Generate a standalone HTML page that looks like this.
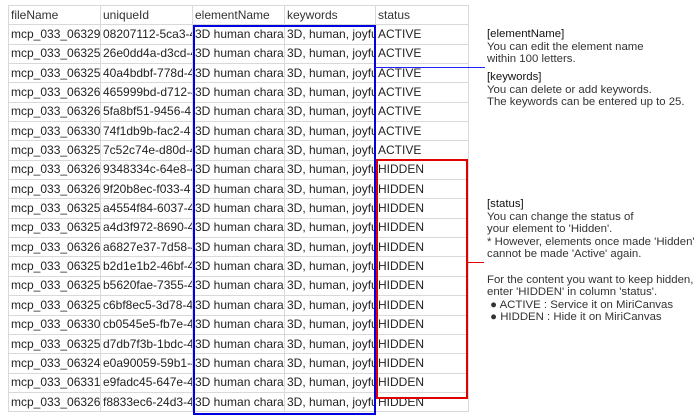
<!DOCTYPE html>
<html><head><meta charset="utf-8"><style>
*{margin:0;padding:0;box-sizing:border-box}
body{width:700px;height:400px;overflow:hidden;background:#fff;font-family:"Liberation Sans",Arial,sans-serif;position:relative}
table{position:absolute;left:8px;top:5px;width:460px;border-collapse:collapse;table-layout:fixed}
td{height:19.35px;border:1px solid #d9d9d9;font-size:12px;color:#222;white-space:nowrap;overflow:hidden;padding:0 0 0 2px;line-height:17px}
.hdr td{color:#333}
.box{position:absolute}
.note{position:absolute;left:487px;font-size:11.4px;line-height:12.6px;color:#333}
.note b{font-weight:normal;color:#111}
</style></head><body>
<table>
<colgroup><col style="width:92px"><col style="width:92px"><col style="width:92px"><col style="width:91px"><col style="width:93px"></colgroup>
<tr class="hdr"><td>fileName</td><td>uniqueId</td><td>elementName</td><td>keywords</td><td>status</td></tr>
<tr><td>mcp_033_06329</td><td>08207112-5ca3-4</td><td>3D human chara</td><td>3D, human, joyfu</td><td>ACTIVE</td></tr>
<tr><td>mcp_033_06325</td><td>26e0dd4a-d3cd-4</td><td>3D human chara</td><td>3D, human, joyfu</td><td>ACTIVE</td></tr>
<tr><td>mcp_033_06325</td><td>40a4bdbf-778d-4</td><td>3D human chara</td><td>3D, human, joyfu</td><td>ACTIVE</td></tr>
<tr><td>mcp_033_06326</td><td>465999bd-d712-4</td><td>3D human chara</td><td>3D, human, joyfu</td><td>ACTIVE</td></tr>
<tr><td>mcp_033_06326</td><td>5fa8bf51-9456-4</td><td>3D human chara</td><td>3D, human, joyfu</td><td>ACTIVE</td></tr>
<tr><td>mcp_033_06330</td><td>74f1db9b-fac2-4</td><td>3D human chara</td><td>3D, human, joyfu</td><td>ACTIVE</td></tr>
<tr><td>mcp_033_06325</td><td>7c52c74e-d80d-4</td><td>3D human chara</td><td>3D, human, joyfu</td><td>ACTIVE</td></tr>
<tr><td>mcp_033_06326</td><td>9348334c-64e8-4</td><td>3D human chara</td><td>3D, human, joyfu</td><td>HIDDEN</td></tr>
<tr><td>mcp_033_06326</td><td>9f20b8ec-f033-4</td><td>3D human chara</td><td>3D, human, joyfu</td><td>HIDDEN</td></tr>
<tr><td>mcp_033_06325</td><td>a4554f84-6037-4</td><td>3D human chara</td><td>3D, human, joyfu</td><td>HIDDEN</td></tr>
<tr><td>mcp_033_06325</td><td>a4d3f972-8690-4</td><td>3D human chara</td><td>3D, human, joyfu</td><td>HIDDEN</td></tr>
<tr><td>mcp_033_06326</td><td>a6827e37-7d58-4</td><td>3D human chara</td><td>3D, human, joyfu</td><td>HIDDEN</td></tr>
<tr><td>mcp_033_06325</td><td>b2d1e1b2-46bf-4</td><td>3D human chara</td><td>3D, human, joyfu</td><td>HIDDEN</td></tr>
<tr><td>mcp_033_06325</td><td>b5620fae-7355-4</td><td>3D human chara</td><td>3D, human, joyfu</td><td>HIDDEN</td></tr>
<tr><td>mcp_033_06325</td><td>c6bf8ec5-3d78-4</td><td>3D human chara</td><td>3D, human, joyfu</td><td>HIDDEN</td></tr>
<tr><td>mcp_033_06330</td><td>cb0545e5-fb7e-4</td><td>3D human chara</td><td>3D, human, joyfu</td><td>HIDDEN</td></tr>
<tr><td>mcp_033_06325</td><td>d7db7f3b-1bdc-4</td><td>3D human chara</td><td>3D, human, joyfu</td><td>HIDDEN</td></tr>
<tr><td>mcp_033_06324</td><td>e0a90059-59b1-4</td><td>3D human chara</td><td>3D, human, joyfu</td><td>HIDDEN</td></tr>
<tr><td>mcp_033_06331</td><td>e9fadc45-647e-4</td><td>3D human chara</td><td>3D, human, joyfu</td><td>HIDDEN</td></tr>
<tr><td>mcp_033_06326</td><td>f8833ec6-24d3-4</td><td>3D human chara</td><td>3D, human, joyfu</td><td>HIDDEN</td></tr>
</table>
<div class="box" style="left:193px;top:25px;width:183px;height:390px;border:2px solid #0000e0"></div>
<div class="box" style="left:375px;top:67px;width:110px;height:1px;background:#2020ff"></div>
<div class="box" style="left:376px;top:159px;width:92px;height:240px;border:2px solid #e00000"></div>
<div class="box" style="left:467px;top:262px;width:17px;height:1px;background:#e00000"></div>
<div class="note" style="top:28px"><b>[elementName]</b><br>You can edit the element name<br>within 100 letters.</div>
<div class="note" style="top:71px"><b>[keywords]</b><br>You can delete or add keywords.<br>The keywords can be entered up to 25.</div>
<div class="note" style="top:198px"><b>[status]</b><br>You can change the status of<br>your element to 'Hidden'.<br>* However, elements once made 'Hidden'<br>cannot be made 'Active' again.<br><br>For the content you want to keep hidden,<br>enter 'HIDDEN' in column 'status'.<br>&nbsp;● ACTIVE : Service it on MiriCanvas<br>&nbsp;● HIDDEN : Hide it on MiriCanvas</div>
</body></html>
